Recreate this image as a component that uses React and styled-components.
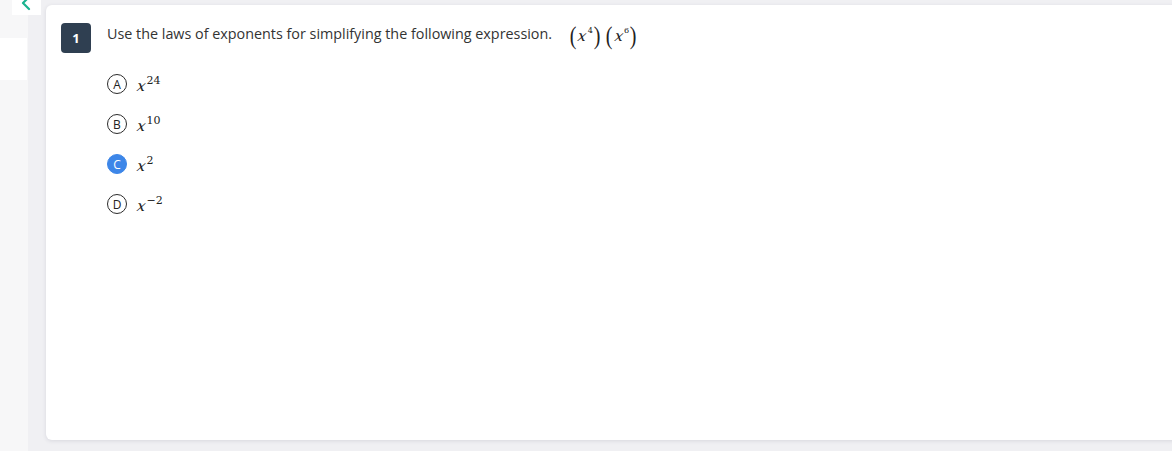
import React from "react";
import styled, { createGlobalStyle } from "styled-components";

const GlobalStyle = createGlobalStyle`
  html, body {
    margin: 0;
    padding: 0;
    background: #f0f0f3;
    font-family: "Open Sans", "Liberation Sans", sans-serif;
    overflow: hidden;
  }
`;

const options = [
  { key: "A", base: "x", exp: "24" },
  { key: "B", base: "x", exp: "10" },
  { key: "C", base: "x", exp: "2", selected: true },
  { key: "D", base: "x", exp: "−2" },
];

export default function App() {
  return (
    <>
      <GlobalStyle />
      <Page>
        <Sidebar>
          <BackButton>
            <svg width="12" height="12" viewBox="0 0 12 12">
              <path d="M9 -3 L3 3 L9 9" fill="none" stroke="#1bb38f" strokeWidth="2.2" strokeLinecap="round" strokeLinejoin="round" />
            </svg>
          </BackButton>
          <SideBlock />
        </Sidebar>
        <Main>
          <Card>
            <QuestionRow>
              <Badge>1</Badge>
              <QuestionText>Use the laws of exponents for simplifying the following expression.</QuestionText>
              <Expr>
                <Paren>(</Paren>
                <Var>x</Var>
                <Sup $small>4</Sup>
                <Paren>)</Paren>
                <Space />
                <Paren>(</Paren>
                <Var>x</Var>
                <Sup $small>6</Sup>
                <Paren>)</Paren>
              </Expr>
            </QuestionRow>
            <OptionList>
              {options.map((o) => (
                <Option key={o.key}>
                  <Letter $selected={o.selected}>{o.key}</Letter>
                  <Answer>
                    <Var>{o.base}</Var>
                    <Sup>{o.exp}</Sup>
                  </Answer>
                </Option>
              ))}
            </OptionList>
          </Card>
        </Main>
      </Page>
    </>
  );
}

const Page = styled.div`
  display: flex;
  width: 1172px;
  height: 451px;
  overflow: hidden;
  position: relative;
`;

const Sidebar = styled.div`
  width: 28px;
  flex-shrink: 0;
  background: #f7f7f8;
  padding-top: 38px;
  box-sizing: border-box;
`;

// scrolled-away back button, overlapping sidebar and page edge
const BackButton = styled.div`
  position: absolute;
  left: 12px;
  top: 0;
  width: 29px;
  height: 15px;
  background: #ffffff;
  display: flex;
  justify-content: center;
  align-items: flex-start;
  z-index: 2;
  svg {
    margin-left: -2px;
  }
`;

const SideBlock = styled.div`
  width: 27px;
  height: 42px;
  background: #ffffff;
`;

const Main = styled.div`
  flex: 1;
  padding: 5px 0 11px 18px;
  box-sizing: border-box;
  overflow: hidden;
`;

const Card = styled.div`
  height: 435px;
  margin-right: -20px;
  background: #ffffff;
  border-radius: 6px;
  box-shadow: 0 1px 4px rgba(40, 40, 70, 0.12);
  padding: 18px 15px;
  box-sizing: border-box;
`;

const QuestionRow = styled.div`
  display: flex;
  align-items: flex-start;
  gap: 16px;
`;

const Badge = styled.div`
  width: 30px;
  height: 30px;
  flex-shrink: 0;
  border-radius: 4px;
  background: #2f3f51;
  color: #ffffff;
  font-weight: 700;
  font-size: 13px;
  display: flex;
  align-items: center;
  justify-content: center;
`;

const QuestionText = styled.span`
  font-size: 14.35px;
  line-height: 22px;
  color: #333333;
`;

const Expr = styled.span`
  font-family: "DejaVu Serif", "Liberation Serif", serif;
  font-size: 15px;
  line-height: 24px;
  color: #222222;
  white-space: nowrap;
  padding-left: 1px;
`;

const Paren = styled.span`
  display: inline-block;
  font-family: "Liberation Serif", serif;
  font-size: 25px;
  line-height: 1;
  vertical-align: -3px;
  transform: scaleX(0.8);
`;

const Space = styled.span`
  display: inline-block;
  width: 4px;
`;

const Var = styled.span`
  display: inline-block;
  font-style: italic;
  font-family: "DejaVu Serif", "Liberation Serif", serif;
  margin-left: 1px;
  transform: skewX(-10deg);
`;

const Sup = styled.span`
  font-family: "DejaVu Serif", "Liberation Serif", serif;
  font-style: normal;
  font-size: ${(p) => (p.$small ? "8px" : "11px")};
  vertical-align: ${(p) => (p.$small ? "8px" : "7px")};
  margin-left: 1px;
  line-height: 1;
`;

const OptionList = styled.div`
  display: flex;
  flex-direction: column;
  gap: 20px;
  margin-top: 21px;
  padding-left: 46px;
`;

const Option = styled.div`
  display: flex;
  align-items: center;
  gap: 9px;
  height: 20px;
`;

const Letter = styled.div`
  width: 20px;
  height: 20px;
  box-sizing: border-box;
  border-radius: 50%;
  border: 1px solid ${(p) => (p.$selected ? "#3d86e8" : "#2b2b2b")};
  background: ${(p) => (p.$selected ? "#3d86e8" : "#ffffff")};
  color: ${(p) => (p.$selected ? "#ffffff" : "#222222")};
  font-size: 12px;
  font-weight: 500;
  display: flex;
  align-items: center;
  justify-content: center;
`;

const Answer = styled.span`
  font-family: "DejaVu Serif", "Liberation Serif", serif;
  font-size: 15px;
  line-height: 1;
  color: #222222;
`;
